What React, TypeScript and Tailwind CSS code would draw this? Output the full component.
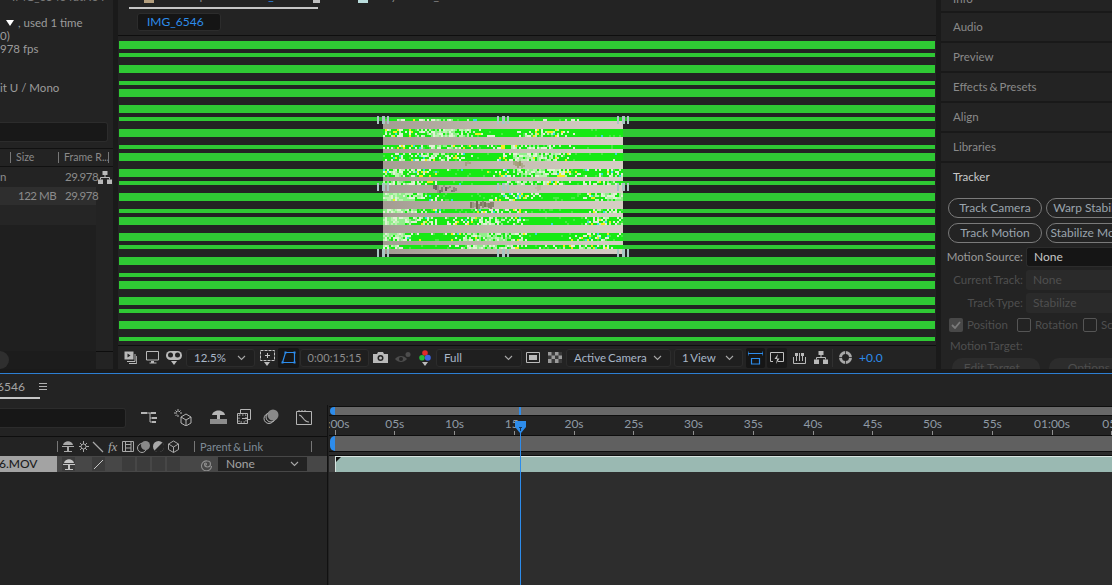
import React from 'react'

const GREEN = '#2fc934'
const PERIOD = [
  [0, 8],
  [12, 4],
  [24, 8],
  [40, 4],
  [48, 8],
]

// y positions of the green bars, relative to the top of the viewer (y=36)
const bars: [number, number][] = []
for (let k = 0; k < 5; k++) {
  PERIOD.forEach(([o, h]) => bars.push([5 + k * 64 + o, h]))
}

function makeRandom(seed: number) {
  let a = seed
  return () => {
    a = (a + 0x6d2b79f5) | 0
    let t = Math.imul(a ^ (a >>> 15), 1 | a)
    t = (t + Math.imul(t ^ (t >>> 7), 61 | t)) ^ t
    return ((t ^ (t >>> 14)) >>> 0) / 4294967296
  }
}

const IMG_X = 264
const IMG_Y = 83
const IMG_W = 240
const IMG_H = 135

function glitchCells() {
  const rnd = makeRandom(6546)
  const cells: { x: number; y: number; w: number; c: string }[] = []
  bars.forEach(([by, bh]) => {
    for (let y = Math.max(by, IMG_Y); y < Math.min(by + bh, IMG_Y + IMG_H); y += 2) {
      let last = ''
      for (let x = 0; x < IMG_W; x += 2) {
        const wave =
          0.24 +
          0.34 * Math.sin(x / 17 + y / 29 + 1) +
          0.24 * Math.sin(x / 41 - y / 15) +
          (x < 22 ? 0.4 : 0) -
          (x > 205 ? 0.05 : 0)
        const edge = wave > 0.2 && wave < 0.42
        const r = rnd()
        const q = rnd()
        let c: string
        if (r < (edge ? 0.1 : 0.004)) c = '#eef01e'
        else if (r < (edge ? 0.15 : 0.008)) c = '#35e0da'
        else if (q < wave) c = q < 0.22 ? '#dff2d4' : q < 0.45 ? '#bbf2b0' : '#90ee8a'
        else c = q > 0.94 ? '#4aea44' : '#16ea14'
        if (c === last) {
          cells[cells.length - 1].w += 2
        } else {
          cells.push({ x: IMG_X + x, y, w: 2, c })
          last = c
        }
      }
    }
  })
  return cells
}

const cells = glitchCells()

// dark marks of the source photo, seen through the beige bands
const marks: [number, number, number, number, string][] = [
  [314, 149, 24, 8, '#55524c'],
  [351, 165, 24, 8, '#5f5b40'],
  [346, 125, 6, 5, '#8b8a55'],
  [394, 125, 12, 7, '#8b8a55'],
  [416, 149, 6, 6, '#a3a46c'],
]

function smudges() {
  const rnd = makeRandom(77)
  const out: { x: number; y: number; h: number; c: string; o: number }[] = []
  marks.forEach(([x, y, w, h, c]) => {
    for (let i = 0; i < w; i += 2) {
      const hh = 2 + Math.floor(rnd() * (h - 1))
      out.push({ x: x + i, y: y + Math.floor(rnd() * (h - hh + 1)), h: hh, c, o: 0.25 + rnd() * 0.65 })
    }
  })
  return out
}

const smudgeBits = smudges()

const handleXs = [IMG_X - 6, IMG_X + 114, IMG_X + 234]
const handleYs = [IMG_Y - 3, IMG_Y + 64, IMG_Y + 130]

function ViewerPicture() {
  return (
    <svg width="816" height="309" viewBox="0 0 816 309" className="block" shapeRendering="crispEdges">
      <defs>
        <linearGradient id="beige" x1="0" x2="1" y1="0" y2="0">
          <stop offset="0" stopColor="#a39c92" />
          <stop offset="0.5" stopColor="#c4bcb1" />
          <stop offset="1" stopColor="#d6cec5" />
        </linearGradient>
      </defs>
      {bars.map(([y, h]) => (
        <rect key={y} x="0" y={y} width="816" height={h} fill={GREEN} />
      ))}
      <rect x={IMG_X} y={IMG_Y} width={IMG_W} height={IMG_H} fill="url(#beige)" />
      {cells.map((c, i) => (
        <rect key={i} x={c.x} y={c.y} width={c.w} height="2" fill={c.c} />
      ))}
      {smudgeBits.map((s, i) => (
        <rect key={i} x={s.x} y={s.y} width="2" height={s.h} fill={s.c} opacity={s.o} />
      ))}
      {/* layer handles */}
      {handleXs.map((x) =>
        handleYs.map((y) => (
          <g key={`${x}-${y}`} fill="#a9c6c4">
            <rect x={x} y={y} width="2" height="8" />
            <rect x={x + 5} y={y} width="3" height="8" />
            <rect x={x + 10} y={y} width="2" height="8" />
          </g>
        )),
      )}
    </svg>
  )
}

const Chevron = ({ className = '' }: { className?: string }) => (
  <svg width="9" height="6" viewBox="0 0 9 6" className={className}>
    <path d="M1 1l3.5 3.5L8 1" fill="none" stroke="#a8a8a8" strokeWidth="1.1" />
  </svg>
)

const Caret = () => (
  <svg width="6" height="4" viewBox="0 0 6 4" className="block">
    <path d="M0 0h6L3 4z" fill="#bdbdbd" />
  </svg>
)

const Icon = ({ w, h, children, className = '' }: { w: number; h: number; children: React.ReactNode; className?: string }) => (
  <svg width={w} height={h} viewBox={`0 0 ${w} ${h}`} className={`block shrink-0 ${className}`}>
    {children}
  </svg>
)

const FlowIcon = ({ className = '' }: { className?: string }) => (
  <Icon w={14} h={13} className={className}>
    <path d="M4.5 0h5v4h-5zM0 8.500h5V13H0zM9 8.500h5V13H9z" fill="#b9b9b9" />
    <path d="M7 4v2.500M2.500 8.500V6.500h9v2" fill="none" stroke="#b9b9b9" />
  </Icon>
)

const Dropdown = ({ w, label, ml }: { w: number; label: string; ml: number }) => (
  <div
    className="flex h-[18px] shrink-0 items-center justify-between rounded-[3px] border border-[#2c2c2c] bg-[#1f1f1f] pr-[8px] pl-[7px]"
    style={{ width: w, marginLeft: ml }}
  >
    <span className="text-[11.5px] leading-none whitespace-nowrap text-[#a9b7c9] [word-spacing:-1px]">{label}</span>
    <Chevron />
  </div>
)

function ViewerToolbar() {
  return (
    <div className="flex h-[23px] items-center pl-[6px]">
      <Icon w={13} h={13}>
        <path d="M0.500 0.500h9v8h-9z" fill="#b9b9b9" />
        <path d="M3.500 2.500l3 2-3 2z" fill="#232323" />
        <path d="M11 3v7.500H3M12.700 5v7.500H5" fill="none" stroke="#b9b9b9" />
      </Icon>
      <Icon w={13} h={13} className="ml-[9px]">
        <path d="M0.500 0.500h12v8.500H0.500z" fill="none" stroke="#b9b9b9" />
        <path d="M5 10h3v1.500h2.500v1h-7v-1H5z" fill="#b9b9b9" />
      </Icon>
      <div className="ml-[7px] flex w-[16px] shrink-0 flex-col items-center">
        <Icon w={16} h={9}>
          <rect x="0" y="0" width="16" height="9" rx="4.500" fill="#b9b9b9" />
          <circle cx="4.500" cy="4" r="2.500" fill="#232323" />
          <circle cx="11.500" cy="4" r="2.500" fill="#232323" />
        </Icon>
        <div className="mt-[1px]">
          <Caret />
        </div>
      </div>
      <Dropdown w={69} label="12.5%" ml={4} />
      <div className="ml-[4px] flex w-[16px] shrink-0 flex-col items-center">
        <Icon w={15} h={11}>
          <path d="M0.500 0.500h14v10H0.500z" fill="none" stroke="#c4c4c4" strokeDasharray="3 1" />
          <path d="M7.500 3v5M5 5.500h5" stroke="#c4c4c4" />
        </Icon>
        <div className="mt-[1px]">
          <Caret />
        </div>
      </div>
      <div className="ml-[3px] flex h-[20px] w-[21px] shrink-0 items-center justify-center rounded-[2px] bg-[#161616]">
        <Icon w={15} h={13}>
          <path d="M4.500 1.500h9l0 10H1.500z" fill="none" stroke="#2d8ceb" strokeWidth="1.200" />
          <path d="M3.500 0.500h2v2h-2zM12.500 0.500h2v2h-2zM0.500 10.500h2v2h-2zM12.500 10.500h2v2h-2z" fill="#2d8ceb" />
        </Icon>
      </div>
      <div className="ml-[1px] flex h-[18px] w-[69px] shrink-0 items-center justify-center rounded-[3px] border border-[#2c2c2c] bg-[#1f1f1f] text-[11px] leading-none tracking-[0.1px] text-[#8d8d8d]">
        0:00:15:15
      </div>
      <Icon w={15} h={11} className="ml-[4px]">
        <path d="M0 2h4l1-2h5l1 2h4v9H0z" fill="#b9b9b9" />
        <circle cx="7.500" cy="6" r="3" fill="#232323" />
        <circle cx="7.500" cy="6" r="1.500" fill="#b9b9b9" />
      </Icon>
      <Icon w={16} h={12} className="ml-[7px]">
        <path d="M0 7c3-4 9-4 12 0-3 4-9 4-12 0z" fill="#4c4c4c" />
        <circle cx="6" cy="7" r="2" fill="#232323" />
        <circle cx="13" cy="2.500" r="2.500" fill="#4c4c4c" />
      </Icon>
      <div className="ml-[8px] flex w-[12px] shrink-0 flex-col items-center">
        <Icon w={12} h={11}>
          <circle cx="6" cy="3" r="2.800" fill="#e02a2a" />
          <circle cx="3" cy="7.800" r="2.800" fill="#25b838" />
          <circle cx="8.800" cy="7.800" r="3" fill="#3b63e0" />
        </Icon>
        <div className="mt-[1px]">
          <Caret />
        </div>
      </div>
      <Dropdown w={86} label="Full" ml={5} />
      <Icon w={14} h={11} className="ml-[4px]">
        <path d="M0.500 0.500h13v10H0.500z" fill="none" stroke="#bcbcbc" />
        <rect x="3" y="3" width="8" height="5" fill="#bcbcbc" />
      </Icon>
      <Icon w={14} h={11} className="ml-[8px]">
        <rect width="14" height="11" fill="#3a3a3a" />
        <path d="M0 0h3.500v3.500H0zM7 0h3.500v3.500H7zM3.500 3.500H7V7H3.500zM10.500 3.500H14V7h-3.500zM0 7h3.500v4H0zM7 7h3.500v4H7z" fill="#9a9a9a" />
      </Icon>
      <Dropdown w={105} label="Active Camera" ml={4} />
      <Dropdown w={69} label="1 View" ml={3} />
      <div className="ml-[3px] flex h-[20px] w-[19px] shrink-0 items-center justify-center rounded-[2px] bg-[#161616]">
        <Icon w={15} h={14}>
          <path d="M0 2.500h15M0 0.500v4M15 0.500v4" stroke="#2d8ceb" strokeWidth="1.200" fill="none" />
          <path d="M3.500 7.500h8v5.500h-8z" fill="none" stroke="#2d8ceb" strokeWidth="1.200" />
        </Icon>
      </div>
      <div className="ml-[2px] flex h-[20px] w-[20px] shrink-0 items-center justify-center rounded-[2px] bg-[#191919]">
        <Icon w={14} h={12}>
          <path d="M0.500 0.500h13v9H8M0.500 0.500v9H3" fill="none" stroke="#c0c0c0" />
          <path d="M8 2L4.500 7H7l-1 5 3.500-5.500H7z" fill="#c0c0c0" />
        </Icon>
      </div>
      <Icon w={13} h={12} className="ml-[6px]">
        <path d="M0.500 5v6.500h12V5M3.500 9V3M6.500 9V1M9.500 9V3" fill="none" stroke="#b9b9b9" />
        <path d="M2 1h3v3H2zM8 1h3v3H8z" fill="#b9b9b9" />
      </Icon>
      <FlowIcon className="ml-[8px]" />
      <div className="ml-[4px] h-[18px] w-px shrink-0 bg-[#303030]" />
      <Icon w={13} h={13} className="ml-[6px]">
        <circle cx="6.500" cy="6.500" r="5" fill="none" stroke="#a8a8a8" strokeWidth="3" />
        <path d="M6.500 0v5M13 6.500H8M6.500 13V8M0 6.500h5" stroke="#232323" strokeWidth="0.800" />
      </Icon>
      <span className="ml-[7px] text-[12px] leading-none text-[#2d8ceb]">+0.0</span>
    </div>
  )
}

function LeftPanel() {
  return (
    <div className="flex w-[113px] shrink-0 flex-col overflow-hidden bg-[#232323] text-[11.5px] text-[#9c9c9c]">
      <div className="h-[7px] overflow-hidden">
        <div className="-mt-[10px] flex items-center pl-[12px] leading-[14px] whitespace-nowrap text-[#7c7c7c]">
          <span>IMG_6546 ratNo f</span>
        </div>
      </div>
      <div className="mt-[9px] flex h-[13px] items-center leading-none whitespace-nowrap">
        <span className="ml-[6px] h-0 w-0 border-x-[4px] border-t-[6px] border-x-transparent border-t-white" />
        <span className="ml-[4px]">, used 1 time</span>
      </div>
      <div className="h-[13px] leading-[13px]">0)</div>
      <div className="h-[13px] leading-[13px]">978 fps</div>
      <div className="mt-[26px] h-[13px] leading-[13px]">it U / Mono</div>
      <div className="mt-[28px] mr-[5px] h-[20px] rounded-r-[3px] border border-l-0 border-[#2c2c2c] bg-[#181818]" />
      <div className="mt-[6px] h-px bg-[#111111]" />
      <div className="flex h-[18px] items-center border-b border-[#111111] text-[10.5px] text-[#8a8a8a]">
        <div className="ml-[10px] h-[11px] w-px shrink-0 bg-[#777777]" />
        <span className="ml-[5px] w-[42px] shrink-0">Size</span>
        <div className="h-[11px] w-px shrink-0 bg-[#777777]" />
        <span className="ml-[5px] w-[44px] shrink-0 whitespace-nowrap">Frame R...</span>
        <div className="h-[11px] w-px shrink-0 bg-[#777777]" />
      </div>
      <div className="flex h-[20px] items-center text-[11.5px] leading-none tracking-[-0.5px] whitespace-nowrap text-[#8c8c8c]">
        <span className="w-[65px] shrink-0">n</span>
        <span className="w-[33px] shrink-0">29.978</span>
        <FlowIcon />
      </div>
      <div className="flex h-[18px] w-[96px] items-center bg-[#2e2e2e] text-[11.5px] leading-none tracking-[-0.5px] whitespace-nowrap text-[#8c8c8c]">
        <span className="ml-[18px] w-[47px] shrink-0">122 MB</span>
        <span>29.978</span>
      </div>
      <div className="flex min-h-0 w-[96px] flex-1 flex-col bg-[#1f1f1f]">
        <div className="h-[20px] bg-[#252525]" />
      </div>
      <div className="flex h-[18px] shrink-0">
        <div className="w-[96px] bg-[#1c1c1c]">
          <div className="-ml-[9px] h-[18px] w-[18px] rounded-full bg-[#2f2f2f]" />
        </div>
        <div className="h-px flex-1 bg-[#0d0d0d]" />
      </div>
    </div>
  )
}

function ViewerPanel() {
  return (
    <div className="ml-[5px] flex w-[818px] shrink-0 flex-col bg-[#232323] text-[12px]">
      <div className="h-[9px] shrink-0 overflow-hidden">
        <div className="relative h-[7px] overflow-hidden">
          <div className="-mt-[11px] flex items-center text-[12px] leading-[14px] whitespace-nowrap text-[#8a8a8a]">
            <span className="ml-[26px] h-[14px] w-[10px] bg-[#b49f7e]" />
            <span className="ml-[21px]">Composition</span>
            <span className="ml-[3px] text-[#2d8ceb]">IMG_6546</span>
            <span className="ml-[11px] h-[14px] w-[7px] bg-[#c0c0c0]" />
            <span className="ml-[38px] h-[14px] w-[10px] bg-[#b9dcdc]" />
            <span className="ml-[11px]">Layer IMG_6546 ratNo f</span>
          </div>
        </div>
        <div className="ml-[11px] h-[2px] w-[189px] bg-[#c6c6c6]" />
      </div>
      <div className="h-[26px] shrink-0 pt-[4px] pl-[19px]">
        <div className="flex h-[18px] w-[84px] items-center rounded-[3px] border border-[#2c2c2c] bg-[#151515] pl-[9px] text-[12px] leading-none text-[#2d8ceb]">
          IMG_6546
        </div>
      </div>
      <div className="h-px shrink-0 bg-[#0e0e0e]" />
      <div className="h-[309px] shrink-0 pl-px">
        <ViewerPicture />
      </div>
      <div className="h-px shrink-0 bg-[#0e0e0e]" />
      <ViewerToolbar />
    </div>
  )
}

const Pill = ({ w, label, ml = 0, dim = false }: { w: number; label: string; ml?: number; dim?: boolean }) => (
  <div
    className={`flex h-[20px] shrink-0 items-center justify-center rounded-full border text-[12px] leading-none whitespace-nowrap ${
      dim ? 'border-transparent bg-[#2c2c2c] text-[#4e4e4e]' : 'border-[#7a7a7a] text-[#9aa4ad]'
    }`}
    style={{ width: w, marginLeft: ml }}
  >
    {label}
  </div>
)

const Tab = ({ label, active = false }: { label: string; active?: boolean }) => (
  <div className="h-[30px] shrink-0 border-t-2 border-[#191919] pt-[6px] pl-[12px] text-[11.5px] leading-[15px] [word-spacing:-1px]">
    <span className={active ? 'text-[#c9c9c9]' : 'text-[#8a8a8a]'}>{label}</span>
  </div>
)

const FormRow = ({ label, value, dark = false }: { label: string; value: string; dark?: boolean }) => (
  <div className="flex h-[20px] shrink-0 items-center">
    <span
      className={`w-[82px] shrink-0 text-right text-[11.5px] leading-none whitespace-nowrap [word-spacing:-1px] ${dark ? 'text-[#9a9a9a]' : 'text-[#4f4f4f]'}`}
    >
      {label}
    </span>
    <div
      className={`ml-[3px] flex h-[20px] flex-1 items-center pl-[7px] text-[12px] leading-none ${
        dark ? 'rounded-l-[3px] border border-r-0 border-[#2c2c2c] bg-[#151515] text-[#c6c6c6]' : 'rounded-l-[3px] bg-[#2a2a2a] text-[#4f4f4f]'
      }`}
    >
      {value}
    </div>
  </div>
)

const Check = ({ label, on = false, w }: { label: string; on?: boolean; w: number }) => (
  <div className="flex shrink-0 items-center" style={{ width: w }}>
    <div
      className={`flex h-[14px] w-[14px] items-center justify-center rounded-[2px] ${on ? 'bg-[#484848]' : 'border border-[#555555]'}`}
    >
      {on && (
        <svg width="10" height="8" viewBox="0 0 10 8">
          <path d="M1 4l3 3 5-6" fill="none" stroke="#7a7a7a" strokeWidth="1.800" />
        </svg>
      )}
    </div>
    <span className="ml-[4px] text-[11.5px] leading-none whitespace-nowrap text-[#4f4f4f]">{label}</span>
  </div>
)

function RightPanel() {
  return (
    <div className="ml-[5px] flex min-w-0 flex-1 flex-col overflow-hidden bg-[#232323]">
      <div className="h-[11px] shrink-0 overflow-hidden">
        <div className="-mt-[9px] pl-[12px] text-[11.5px] leading-[15px] text-[#8a8a8a]">Info</div>
      </div>
      <Tab label="Audio" />
      <Tab label="Preview" />
      <Tab label="Effects &amp; Presets" />
      <Tab label="Align" />
      <Tab label="Libraries" />
      <Tab label="Tracker" active />
      <div className="flex shrink-0 pt-[7px] pl-[7px]">
        <Pill w={94} label="Track Camera" />
        <Pill w={94} label="Warp Stabilizer" ml={4} />
      </div>
      <div className="flex shrink-0 pt-[5px] pl-[7px]">
        <Pill w={94} label="Track Motion" />
        <Pill w={94} label="Stabilize Motion" ml={4} />
      </div>
      <div className="flex shrink-0 flex-col gap-[3px] pt-[4px]">
        <FormRow label="Motion Source:" value="None" dark />
        <FormRow label="Current Track:" value="None" />
        <FormRow label="Track Type:" value="Stabilize" />
      </div>
      <div className="mt-[5px] flex h-[14px] shrink-0 items-center pl-[8px]">
        <Check label="Position" on w={68} />
        <Check label="Rotation" w={66} />
        <Check label="Scale" w={60} />
      </div>
      <div className="mt-[7px] h-[14px] shrink-0 pl-[9px] text-[11.5px] leading-[14px] whitespace-nowrap text-[#4f4f4f] [word-spacing:-1px]">
        Motion Target:
      </div>
      <div className="flex shrink-0 pt-[5px] pl-[11px]">
        <Pill w={88} label="Edit Target..." dim />
        <Pill w={88} label="Options..." ml={9} dim />
      </div>
    </div>
  )
}

function TimelineLeft() {
  const g = '#b5b5b5'
  const h = '#a8a8a8'
  return (
    <div className="flex w-[327px] shrink-0 flex-col">
      <div className="flex h-[23px] shrink-0 items-center pt-[2px] text-[12px] leading-none">
        <span className="-ml-[3px] text-[#a4a4a4]">6546</span>
        <svg width="8" height="7" viewBox="0 0 8 7" className="ml-[14px]">
          <path d="M0 .5h8M0 3.500h8M0 6.500h8" stroke="#b0b0b0" />
        </svg>
      </div>
      <div className="h-[2px] w-[40px] shrink-0 bg-[#c6c6c6]" />
      <div className="flex h-[37px] shrink-0 items-start pt-[9px]">
        <div className="h-[20px] w-[126px] shrink-0 rounded-r-[3px] border border-l-0 border-[#2c2c2c] bg-[#171717]" />
        <Icon w={17} h={17} className="mt-[1px] ml-[15px]">
          <path d="M0 3h6v2H0zM10 3h5v2h-5zM11 8h5v2h-5zM11 12h4v2h-4z" fill={g} />
          <path d="M6 4h5M9 4v9h2M9 9h2" fill="none" stroke={g} />
        </Icon>
        <Icon w={18} h={17} className="mt-[1px] ml-[16px]">
          <path d="M4 0v3M0 4h3M6 4h2M4 6v2M1.500 1.500l1.500 1.500M6.500 1.500L5 3M1.500 7L3 5.500" stroke={g} />
          <path d="M12 5l5 3v6l-5 3-5-3V8zM7 8l5 3 5-3M12 11v6" fill="none" stroke={g} />
        </Icon>
        <Icon w={17} h={16} className="mt-[1px] ml-[18px]">
          <path d="M2 6c1-6 12-6 13 0z" fill={g} />
          <path d="M7 6h3v4H7z" fill={g} />
          <rect x="0" y="10" width="17" height="5" fill="#8c8c8c" />
        </Icon>
        <Icon w={14} h={15} className="mt-[1px] ml-[10px]">
          <path d="M3.500.5h10v10h-10z" fill="#232323" stroke={g} />
          <path d="M.5 4.500h10v10H.5z" fill="#232323" stroke={g} />
          <path d="M2 6h7v7H2z" fill="none" stroke={g} strokeDasharray="1.500 1.500" />
          <path d="M5 9.500h5" stroke={g} />
        </Icon>
        <Icon w={16} h={15} className="mt-[1px] ml-[12px]">
          <circle cx="6" cy="9.500" r="5" fill="none" stroke={g} />
          <circle cx="8" cy="8" r="5" fill="none" stroke={g} />
          <circle cx="10" cy="6" r="5.500" fill="#8a8a8a" />
        </Icon>
        <Icon w={16} h={16} className="mt-[1px] ml-[17px]">
          <path d="M.5 2.500h15v13H.5z" fill="none" stroke={g} />
          <path d="M3 1v2M6 1v2M9 1v2" stroke={g} />
          <path d="M3 6c4 0 4 7 10 7" fill="none" stroke={g} strokeWidth="1.200" />
        </Icon>
      </div>
      <div className="h-px shrink-0 bg-[#0e0e0e]" />
      <div className="flex h-[19px] shrink-0 items-center">
        <div className="ml-[57px] h-[11px] w-px shrink-0 bg-[#777777]" />
        <Icon w={122} h={13} className="ml-[4px]">
          <path d="M1 5c1-5 9-5 10 0zM0 6h12v1H0zM5 7h2v4H5zM2 11h8v1H2z" fill={h} />
          <circle cx="21.500" cy="6.500" r="2.500" fill="none" stroke={h} />
          <path d="M21.500 1v3M21.500 9v3M17 6.500h2M24 6.500h3M18 3l2 2M25 3l-2 2M18 10l2-2M25 10l-2-2" stroke={h} />
          <path d="M31 2l10 10" stroke={h} strokeWidth="1.300" />
          <text x="46" y="11" fontSize="13" fontStyle="italic" fontFamily="Liberation Serif, serif" fill={h}>
            fx
          </text>
          <path d="M60.500 1.500h11v10h-11z" fill="none" stroke={h} />
          <path d="M63.500 1.500v10M69 1.500v10M63.500 4.500H69M63.500 8H69" stroke={h} />
          <circle cx="80" cy="8" r="4.500" fill="none" stroke={h} />
          <circle cx="83.500" cy="5.500" r="4.500" fill="#8a8a8a" />
          <circle cx="96.500" cy="6.500" r="5.500" fill={h} />
          <path d="M92.500 10.500l8-8a5.500 5.500 0 0 1-8 8z" fill="#232323" />
          <path d="M111.500 1l5 3v5.500l-5 3-5-3V4zM106.500 4l5 3 5-3M111.500 7v5.500" fill="none" stroke={h} />
        </Icon>
        <div className="ml-[10px] h-[11px] w-px shrink-0 bg-[#777777]" />
        <span className="ml-[5px] w-[111px] shrink-0 text-[11px] leading-none text-[#7f8b96] [word-spacing:-1px]">Parent &amp; Link</span>
        <div className="h-[11px] w-px shrink-0 bg-[#777777]" />
      </div>
      <div className="flex h-[16px] shrink-0 items-center bg-[#474747]">
        <div className="flex h-full w-[57px] shrink-0 items-center bg-[#a3a3a3] text-[12px] leading-none font-medium text-[#1d1d1d]">
          <span className="-ml-[1px]">6.MOV</span>
        </div>
        <div className="ml-[5px] flex h-[14px] w-[13px] items-center justify-center bg-[#3c3c3c]">
          <Icon w={12} h={12}>
            <path d="M1 5c1-5 9-5 10 0zM0 6h12v1H0zM5 7h2v4H5zM2 11h8v1H2z" fill="#c6c6c6" />
          </Icon>
        </div>
        <div className="ml-[17px] flex h-[14px] w-[13px] items-center justify-center bg-[#3c3c3c]">
          <svg width="11" height="11" viewBox="0 0 11 11">
            <path d="M1 10L10 1" stroke="#c6c6c6" />
          </svg>
        </div>
        <div className="ml-[17px] h-[14px] w-[13px] bg-[#3c3c3c]" />
        <div className="ml-[2px] h-[14px] w-[13px] bg-[#3c3c3c]" />
        <div className="ml-[2px] h-[14px] w-[13px] bg-[#3c3c3c]" />
        <div className="ml-[2px] h-[14px] w-[13px] bg-[#3c3c3c]" />
        <Icon w={13} h={13} className="ml-[19px]">
          <path d="M6.500 7a1 1 0 1 0-1-1 3 3 0 1 0 3-3 5 5 0 1 0 4 5" fill="none" stroke="#8f8f8f" strokeWidth="1.100" />
        </Icon>
        <div className="ml-[6px] flex h-[14px] w-[89px] items-center justify-between bg-[#232323] px-[8px] text-[12px] leading-none text-[#a4a4a4]">
          None
          <Chevron />
        </div>
      </div>
    </div>
  )
}

const TICKS = ['0:00s', '05s', '10s', '15s', '20s', '25s', '30s', '35s', '40s', '45s', '50s', '55s', '01:00s', '05s']

function TimelineRight() {
  return (
    <div className="relative ml-px flex min-w-0 flex-1 flex-col overflow-hidden">
      <div className="h-[32px] shrink-0" />
      <div className="h-px shrink-0 bg-[#0e0e0e]" />
      <div className="flex h-[8px] shrink-0">
        <div className="ml-[1px] h-full w-[5px] shrink-0 rounded-l-full bg-[#2d8ceb]" />
        <div className="flex-1 bg-[#686868]" />
      </div>
      <div className="h-px shrink-0 bg-[#0e0e0e]" />
      <div className="flex h-[19px] shrink-0 items-start overflow-visible pl-[6px]">
        {TICKS.map((t, i) => (
          <div key={i} className="flex w-[59.75px] shrink-0 flex-col items-center">
            <div className="-ml-[59.75px] flex w-[59.75px] flex-col items-center">
              <span className="mt-[1px] text-[12px] leading-[13px] whitespace-nowrap text-[#8f9aa5]">{t}</span>
              <div className={`w-px bg-[#8f8f8f] ${t === '01:00s' || i === 0 ? 'h-[6px]' : 'mt-[1px] h-[4px]'}`} />
            </div>
          </div>
        ))}
      </div>
      <div className="h-px shrink-0 bg-[#0e0e0e]" />
      <div className="flex h-[15px] shrink-0">
        <div className="ml-[1px] h-full w-[5px] shrink-0 rounded-l-full bg-[#2d8ceb]" />
        <div className="flex-1 bg-[#606060]" />
      </div>
      <div className="h-[5px] shrink-0 border-y border-[#0e0e0e] bg-[#2a2a2a]" />
      <div className="flex h-[16px] shrink-0">
        <div className="w-[6px] shrink-0 bg-[#474747]" />
        <div className="relative flex-1 border-t border-l border-[#d8e4e0] bg-[#9ab9b2]">
          <span className="absolute top-0 left-0 h-0 w-0 border-t-[5px] border-r-[5px] border-t-[#111111] border-r-transparent" />
        </div>
      </div>
      <div className="min-h-0 flex-1 bg-[#2d2d2d]" />
      {/* work area marker */}
      <div className="absolute top-[33px] left-[190px] h-[8px] w-[2px] bg-[#2d8ceb]" />
      {/* playhead */}
      <div className="absolute top-[47px] bottom-0 left-[186px] flex w-[11px] flex-col items-center">
        <svg width="11" height="12" viewBox="0 0 11 12" className="block shrink-0">
          <path d="M0 0h11v6l-5 6h-1l-5-6z" fill="#2d8ceb" />
          <path d="M4 6h3v1H6v3H5V7H4z" fill="#12345a" />
        </svg>
        <div className="w-px flex-1 bg-[#2d8ceb]" />
      </div>
    </div>
  )
}

export default function App() {
  return (
    <div
      className="flex h-[585px] w-[1112px] flex-col overflow-hidden bg-[#1a1a1a]"
      style={{ fontFamily: 'Lato, "Noto Sans", sans-serif' }}
    >
      <div className="flex h-[369px] shrink-0">
        <LeftPanel />
        <ViewerPanel />
        <RightPanel />
      </div>
      <div className="h-[4px] shrink-0" />
      <div className="h-px shrink-0 bg-[#2d7fd3]" />
      <div className="flex min-h-0 flex-1 bg-[#232323]">
        <TimelineLeft />
        <div className="mt-[31px] w-px shrink-0 bg-[#111111]" />
        <TimelineRight />
      </div>
    </div>
  )
}
